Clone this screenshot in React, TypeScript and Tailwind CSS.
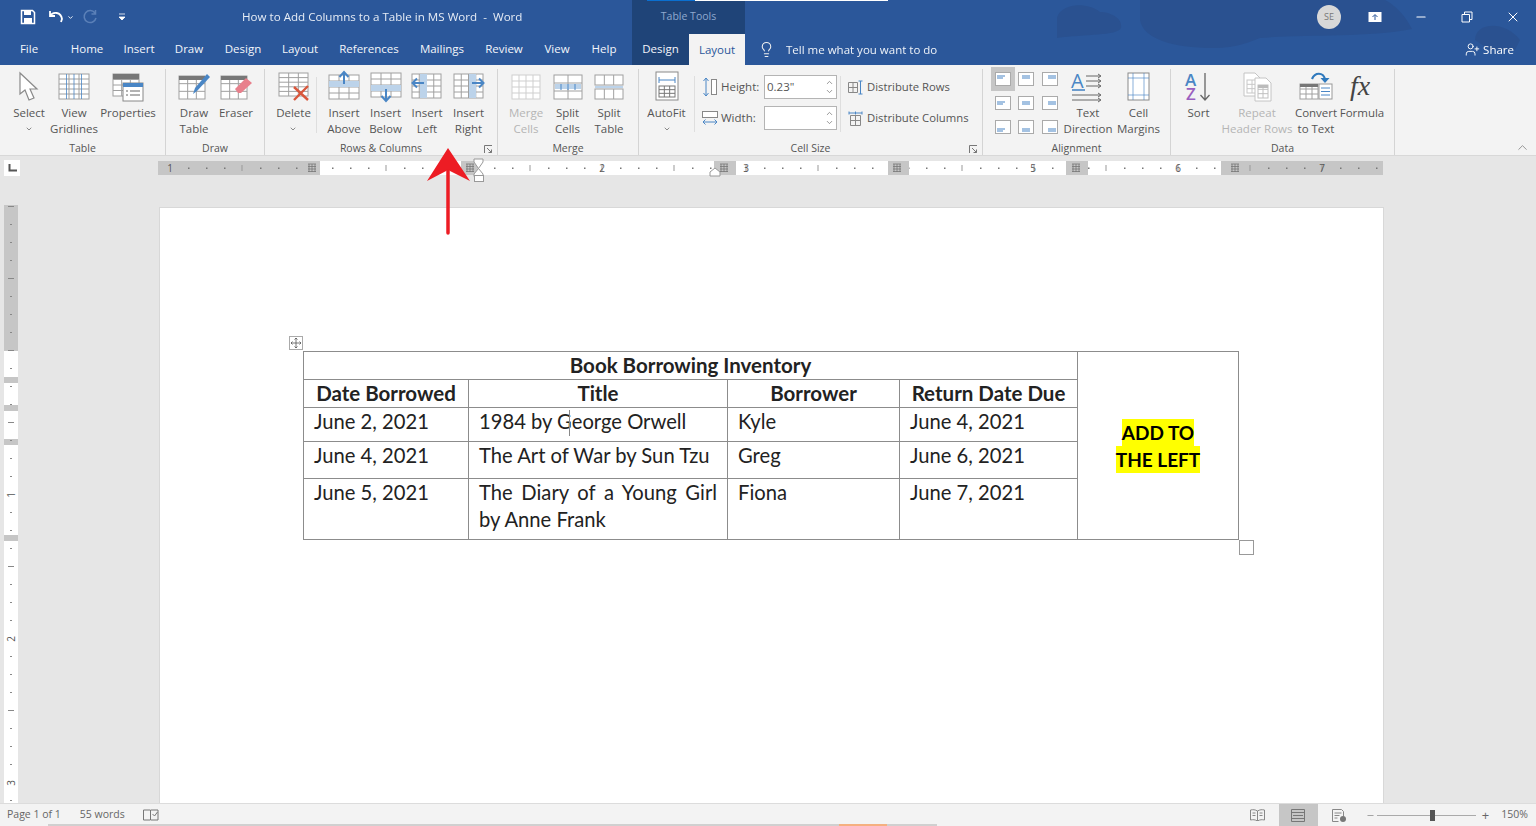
import { Lightbulb, Minus, UserPlus, X, ChevronUp, ChevronDown } from "lucide-react";
import type { ReactNode } from "react";

const LINE = "#a0a0a0";
const BLUE = "#4a86c5";
const PALE = "#bcd3ea";

function Lines({ x, y, w, h, cols, rows, color = LINE }: { x: number; y: number; w: number; h: number; cols: number; rows: number; color?: string }) {
	const v = Array.from({ length: cols - 1 }, (_, i) => x + ((i + 1) * w) / cols);
	const r = Array.from({ length: rows - 1 }, (_, i) => y + ((i + 1) * h) / rows);
	return (
		<g stroke={color} strokeWidth="1" fill="none">
			<rect x={x} y={y} width={w} height={h} fill="#fff" />
			{v.map((p) => (
				<line key={p} x1={p} x2={p} y1={y} y2={y + h} />
			))}
			{r.map((p) => (
				<line key={p} x1={x} x2={x + w} y1={p} y2={p} />
			))}
		</g>
	);
}

function Ico({ children, w = 32 }: { children: ReactNode; w?: number }) {
	return (
		<svg width={w} height="32" viewBox={`0 0 ${w} 32`} className="block overflow-visible">
			{children}
		</svg>
	);
}

const icons: Record<string, ReactNode> = {
	select: (
		<Ico>
			<path d="M7 2v21l5-4 4 10 5-2-4-9h7z" fill="#fff" stroke="#8a8a8a" strokeWidth="1.2" />
		</Ico>
	),
	grid: (
		<Ico>
			<Lines x={1} y={3} w={30} h={25} cols={3} rows={5} />
			<path d="M8.500 3v25M16 3v25M23.500 3v25" stroke={BLUE} strokeOpacity=".8" />
		</Ico>
	),
	props: (
		<Ico>
			<Lines x={1} y={3} w={26} h={22} cols={3} rows={4} />
			<rect x="1" y="3" width="26" height="5" fill="#777" />
			<rect x="11" y="12" width="20" height="18" fill="#fff" stroke="#888" />
			<rect x="11" y="12" width="20" height="4" fill={BLUE} />
			<path d="M14 20h2M18 20h10M14 24h2M18 24h10" stroke="#666" />
		</Ico>
	),
	draw: (
		<Ico>
			<Lines x={1} y={5} w={26} h={23} cols={3} rows={3} />
			<rect x="1" y="5" width="26" height="4" fill="#777" />
			<path d="M15 23l2-6 12-14 3 3-13 14z" fill={BLUE} />
		</Ico>
	),
	eraser: (
		<Ico>
			<Lines x={1} y={5} w={26} h={23} cols={3} rows={3} />
			<rect x="1" y="5" width="26" height="4" fill="#777" />
			<path d="M15 18l11-11 6 5-11 10h-3z" fill="#e8808c" />
		</Ico>
	),
	del: (
		<Ico>
			<Lines x={1} y={2} w={29} h={23} cols={3} rows={5} />
			<path d="M16 16l14 13M30 15L16 29" stroke="#d9573c" strokeWidth="2.400" />
		</Ico>
	),
	above: (
		<Ico>
			<Lines x={1} y={4} w={30} h={24} cols={3} rows={4} />
			<rect x="1" y="10" width="30" height="6" fill={PALE} />
			<path d="M16 13V1M11.500 6L16 1l4.500 5" stroke={BLUE} strokeWidth="2" fill="none" />
		</Ico>
	),
	below: (
		<Ico>
			<Lines x={1} y={2} w={30} h={24} cols={3} rows={4} />
			<rect x="1" y="14" width="30" height="6" fill={PALE} />
			<path d="M16 18v12M11.500 25l4.500 5 4.500-5" stroke={BLUE} strokeWidth="2" fill="none" />
		</Ico>
	),
	left: (
		<Ico>
			<Lines x={1} y={3} w={29} h={24} cols={4} rows={4} />
			<rect x="9" y="3" width="7" height="24" fill={PALE} />
			<path d="M13 12H1.500M6 7.500L1.500 12 6 16.500" stroke={BLUE} strokeWidth="2" fill="none" />
		</Ico>
	),
	right: (
		<Ico>
			<Lines x={1} y={3} w={29} h={24} cols={4} rows={4} />
			<rect x="16" y="3" width="7" height="24" fill={PALE} />
			<path d="M19 12h11.500M26 7.500l4.500 4.500-4.500 4.500" stroke={BLUE} strokeWidth="2" fill="none" />
		</Ico>
	),
	merge: (
		<Ico>
			<Lines x={2} y={4} w={28} h={24} cols={4} rows={4} color="#cfcfcf" />
		</Ico>
	),
	split: (
		<Ico>
			<Lines x={2} y={4} w={28} h={24} cols={2} rows={3} />
			<rect x="3" y="13" width="26" height="5" fill={PALE} />
			<path d="M9 13v6M16 13v6M23 13v6" stroke={BLUE} />
		</Ico>
	),
	splitT: (
		<Ico>
			<Lines x={2} y={4} w={28} h={10} cols={3} rows={1} />
			<Lines x={2} y={18} w={28} h={10} cols={3} rows={1} />
			<path d="M2 16h28" stroke={PALE} strokeWidth="2" />
		</Ico>
	),
	autofit: (
		<Ico>
			<rect x="5" y="1" width="22" height="28" fill="#fff" stroke="#8a8a8a" />
			<path d="M8 9h16M8 6v6M24 6v6" stroke={BLUE} />
			<Lines x={8} y={15} w={16} h={11} cols={3} rows={3} color="#777" />
		</Ico>
	),
	textdir: (
		<Ico w={34}>
			<text x="0" y="17" fontSize="20" fontFamily="'Open Sans', sans-serif" fill={BLUE}>
				A
			</text>
			<path d="M1 19h13" stroke={BLUE} strokeWidth="1.600" />
			<path d="M15 5h14M15 10h14M15 15h14M1 24h28M1 29h28M27 3l3 2-3 2M27 8l3 2-3 2M27 13l3 2-3 2M27 22l3 2-3 2M27 27l3 2-3 2" stroke="#666" fill="none" />
		</Ico>
	),
	margins: (
		<Ico>
			<rect x="5" y="2" width="21" height="27" fill="#fff" stroke="#8a8a8a" />
			<path d="M5 7h21M5 24h21M10 2v27M21 2v27" stroke={BLUE} strokeOpacity=".65" />
		</Ico>
	),
	sort: (
		<Ico w={28}>
			<text x="0" y="15" fontSize="17" fontFamily="'Open Sans', sans-serif" fontWeight="600" fill={BLUE}>
				A
			</text>
			<text x="1" y="29" fontSize="17" fontFamily="'Open Sans', sans-serif" fontWeight="600" fill="#9a5fc0">
				Z
			</text>
			<path d="M20 2v27M15.500 24l4.500 5 4.500-5" stroke="#666" strokeWidth="1.300" fill="none" />
		</Ico>
	),
	repeat: (
		<Ico>
			<path d="M3 2h11l5 5v18H3z" fill="#fff" stroke="#c4c4c4" />
			<Lines x={6} y={9} w={10} h={13} cols={2} rows={3} color="#c8c8c8" />
			<path d="M14 7h11l5 5v18H14z" fill="#fff" stroke="#c4c4c4" />
			<Lines x={17} y={14} w={10} h={13} cols={2} rows={3} color="#c0c0c0" />
			<rect x="17" y="14" width="10" height="3" fill="#bbb" />
		</Ico>
	),
	convert: (
		<Ico w={34}>
			<path d="M13 8C16 1 24 1 26 8" stroke="#2f79bd" strokeWidth="2.200" fill="none" />
			<path d="M21.500 7h9l-4.500 5z" fill="#2f79bd" />
			<Lines x={1} y={13} w={18} h={15} cols={3} rows={3} />
			<rect x="1" y="13" width="18" height="3" fill="#777" />
			<rect x="20" y="13" width="13" height="15" fill="#fff" stroke="#999" />
			<path d="M22 17h9M22 20.500h9M22 24h9" stroke={BLUE} />
		</Ico>
	),
	fx: (
		<Ico w={30}>
			<text x="3" y="24" fontSize="28" fontStyle="italic" fontFamily="'Liberation Serif', serif" fill="#444">
				fx
			</text>
		</Ico>
	),
};

function Btn({ icon, l1, l2, w, off, caret }: { icon: string; l1: string; l2?: string; w: string; off?: boolean; caret?: boolean }) {
	return (
		<div className={`${w} flex flex-col items-center shrink-0`}>
			<div className="h-[36px] flex items-center justify-center">{icons[icon]}</div>
			<div className={`text-center leading-[16px] whitespace-nowrap ${off ? "text-[#b5b5b5]" : "text-[#555]"}`}>
				<div>{l1}</div>
				{l2 && <div>{l2}</div>}
				{caret && (
					<div className="h-[16px] flex justify-center items-center">
						<ChevronDown size={8} strokeWidth={2} />
					</div>
				)}
			</div>
		</div>
	);
}

function Group({ label, w, children, launcher, noBorder }: { label: string; w: string; children: ReactNode; launcher?: boolean; noBorder?: boolean }) {
	return (
		<div className={`${w} h-full flex flex-col shrink-0 relative ${noBorder ? "" : "border-r border-[#d4d4d4]"}`}>
			<div className="flex-1 flex min-h-0">{children}</div>
			<div className="h-[14px] text-center leading-[14px] text-[10.500px] text-[#555]">{label}</div>
			{launcher && (
				<svg width="9" height="9" viewBox="0 0 9 9" className="absolute right-[4px] bottom-[1px]">
					<path d="M.5 8V.5H8M3 3l4.500 4.500M7.500 4.500v3h-3" stroke="#777" fill="none" />
				</svg>
			)}
		</div>
	);
}

function AlignBox({ y, align, on }: { y: number; align: number; on?: boolean }) {
	const x = align === 0 ? 2 : align === 1 ? 4 : 6;
	return (
		<div className={`h-[24px] flex items-center justify-center ${on ? "bg-[#c6c6c6]" : ""}`}>
			<svg width="16" height="14" viewBox="0 0 16 14">
				<rect x=".5" y=".5" width="15" height="13" fill="#fff" stroke="#aaa" />
				<path d={`M${x} ${y}h8M${x} ${y + 2}h${align === 0 ? 6 : 8}`} stroke={BLUE} strokeWidth="1.200" />
			</svg>
		</div>
	);
}

function Spin({ value }: { value?: string }) {
	return (
		<div className="w-[73px] h-[24px] border border-[#b4b4b4] bg-white flex items-center justify-between pl-[2px] pr-[2px] text-[#555]">
			<span>{value}</span>
			<span className="flex flex-col text-[#777]">
				<ChevronUp size={9} />
				<ChevronDown size={9} />
			</span>
		</div>
	);
}

function HRuler() {
	const ticks: number[] = [];
	for (let x = 170 - 158 + 18; x < 1225; x += 18) ticks.push(x);
	const nums = [
		[12, "1"],
		[444, "2"],
		[588, "3"],
		[875, "5"],
		[1020, "6"],
		[1164, "7"],
	] as const;
	return (
		<div className="w-[1225px] h-[14px] mt-[5px] ml-[138px] relative flex bg-white">
			<div className="w-[156px] bg-[#c6c6c6]" />
			<div className="flex-1" />
			<div className="w-[162px] bg-[#c6c6c6]" />
			<svg width="1225" height="14" className="absolute left-0 top-0 overflow-visible">
				{ticks.map((x, i) =>
					(i + 1) % 4 === 0 ? (
						<line key={x} x1={x} x2={x} y1="4" y2="10" stroke="#999" />
					) : (
						<rect key={x} x={x} y="6.500" width="1.500" height="1.500" fill="#777" />
					),
				)}
				<rect x="145" width="17" height="14" fill="#c6c6c6" />
				<rect x="303" width="17" height="14" fill="#c6c6c6" />
				<rect x="556" width="22" height="14" fill="#c6c6c6" />
				<rect x="730" width="21" height="14" fill="#c6c6c6" />
				<rect x="908" width="22" height="14" fill="#c6c6c6" />
				<rect x="1068" width="20" height="14" fill="#c6c6c6" />
				{[150, 308, 562, 735, 914, 1073].map((x) => (
					<path key={x} d={`M${x} 3h8M${x} 5.500h8M${x} 8h8M${x} 10.500h8M${x + 1} 3v8M${x + 4} 3v8M${x + 7} 3v8`} stroke="#777" strokeWidth=".8" />
				))}
				{nums.map(([x, t]) => (
					<text key={t} x={x} y="11" fontSize="10" textAnchor="middle" fill="#555" fontFamily="'Open Sans', sans-serif">
						{t}
					</text>
				))}
				<path d="M316 -2h9v3l-4.500 6.500 4.500 5.500v2.500h-9v-2.500l4.500-5.500-4.500-6.500z" fill="#fff" stroke="#999" />
				<rect x="316.500" y="14.500" width="9" height="6" fill="#fff" stroke="#999" />
				<path d="M552 15v-4l5-4 5 4v4z" fill="#fff" stroke="#999" />
			</svg>
		</div>
	);
}

function VRuler() {
	const ticks: number[] = [];
	for (let y = 0; y < 598; y += 18) ticks.push(y);
	return (
		<div className="w-[14px] h-[598px] -mt-[2px] relative flex flex-col bg-white">
			<div className="h-[146px] bg-[#c6c6c6] shrink-0" />
			<div className="h-[26px] shrink-0" />
			<div className="h-[6px] bg-[#c6c6c6] shrink-0" />
			<div className="h-[22px] shrink-0" />
			<div className="h-[6px] bg-[#c6c6c6] shrink-0" />
			<div className="h-[28px] shrink-0" />
			<div className="h-[6px] bg-[#c6c6c6] shrink-0" />
			<div className="h-[90px] shrink-0" />
			<div className="h-[6px] bg-[#c6c6c6] shrink-0" />
			<svg width="14" height="598" className="absolute left-0 top-0">
				{ticks.map((y, i) =>
					i % 4 === 0 ? (
						<line key={y} x1="4" x2="10" y1={y + 1.500} y2={y + 1.500} stroke="#888" />
					) : (
						<rect key={y} x="6" y={y + 1} width="2" height="1" fill="#888" />
					),
				)}
				{[
					[290, "1"],
					[434, "2"],
					[578, "3"],
				].map(([y, t]) => (
					<g key={t} transform={`translate(7 ${y}) rotate(-90)`}>
						<rect x="-5" y="-6" width="10" height="12" fill="#fff" />
						<text y="3.500" fontSize="10" textAnchor="middle" fill="#555" fontFamily="'Open Sans', sans-serif">
							{t}
						</text>
					</g>
				))}
			</svg>
		</div>
	);
}

function Td({ children, className = "", colSpan, rowSpan }: { children: ReactNode; className?: string; colSpan?: number; rowSpan?: number }) {
	return (
		<td colSpan={colSpan} rowSpan={rowSpan} className={`border border-[#8c8c8c] px-[10px] align-top p-0 ${className}`}>
			{children}
		</td>
	);
}

export default function App() {
	return (
		<div className="w-[1536px] h-[826px] overflow-hidden flex flex-col font-['Open_Sans',sans-serif] text-[11.500px] relative blur-[0.35px]">
			{/* title bar */}
			<div className="h-[65px] bg-[#2b579a] flex text-white shrink-0 relative">
				<div className="w-[632px] flex flex-col shrink-0">
					<div className="h-[34px] flex items-center relative">
						<svg width="16" height="16" viewBox="0 0 16 16" className="ml-[20px]">
							<path d="M1.500 1.500h11l2 2v11h-13z" fill="none" stroke="#fff" strokeWidth="1.500" />
							<path d="M4 1.500h7v4.500H4z" fill="#fff" />
							<path d="M4 9h8v5.500H4z" fill="#fff" />
						</svg>
						<svg width="16" height="16" viewBox="0 0 16 16" className="ml-[12px]">
							<path d="M2 7c3-5 11-4 12 3l-1 3M2 2v5h5" stroke="#fff" strokeWidth="1.800" fill="none" />
						</svg>
						<ChevronDown size={7} strokeWidth={3} className="ml-[3px]" />
						<svg width="16" height="16" viewBox="0 0 16 16" className="ml-[8px]">
							<path d="M13 4A6 6 0 1 0 14 9M13.500 1v4h-4" stroke="#5b80b8" strokeWidth="1.500" fill="none" />
						</svg>
						<svg width="8" height="8" viewBox="0 0 8 8" className="ml-[20px]">
							<path d="M1 1h6M1 4h6l-3 3z" stroke="#fff" fill="#fff" strokeWidth=".8" />
						</svg>
						<span className="ml-[116px] text-[11.600px] text-[#e6ecf5] whitespace-nowrap">How to Add Columns to a Table in MS Word&nbsp; -&nbsp; Word</span>
					</div>
					<div className="h-[31px] flex items-center pb-[1px] text-[#f3f6fb] text-center">
						<span className="w-[58px]">File</span>
						<span className="w-[58px]">Home</span>
						<span className="w-[46px]">Insert</span>
						<span className="w-[54px]">Draw</span>
						<span className="w-[54px]">Design</span>
						<span className="w-[60px]">Layout</span>
						<span className="w-[78px]">References</span>
						<span className="w-[68px]">Mailings</span>
						<span className="w-[56px]">Review</span>
						<span className="w-[50px]">View</span>
						<span className="w-[44px]">Help</span>
					</div>
				</div>
				<div className="w-[113px] bg-[#1f4478] flex flex-col shrink-0">
					<div className="h-[34px] flex items-center justify-center text-[10.500px] text-[#8fa9cf]">Table Tools</div>
					<div className="h-[31px] flex items-stretch text-center">
						<div className="w-[57px] flex items-center justify-center pb-[1px] text-[#f3f6fb]">Design</div>
						<div className="w-[56px] bg-[#f3f3f3] flex items-center justify-center text-[#2b579a]">Layout</div>
					</div>
				</div>
				<div className="flex-1 flex flex-col relative min-w-0">
					<svg width="791" height="65" className="absolute left-0 top-0">
						<path d="M312 20C312 5 340 0 355 12C365 12 378 18 376 28C372 36 340 34 312 38z" fill="#2a5190" />
						<path d="M395 0V20C398 38 425 48 470 48C490 48 505 42 515 38C560 34 620 38 667 29C660 15 650 5 640 0z" fill="#2a5190" />
						<path d="M730 40C730 22 760 20 775 40L770 50H745z" fill="#2a5190" />
					</svg>
					<div className="h-[34px] flex items-center justify-end relative">
						<div className="w-[24px] h-[24px] rounded-full bg-[#d8d8d8] text-[#777] text-[9px] flex items-center justify-center mr-[27px]">SE</div>
						<svg width="14" height="12" viewBox="0 0 14 12" className="mr-[32px]">
							<rect x=".5" y="1" width="13" height="10" fill="#fff" />
							<path d="M7 9V4M4.500 6L7 3.500 9.500 6" stroke="#2b579a" fill="none" />
						</svg>
						<Minus size={14} className="mr-[33px]" />
						<svg width="12" height="12" viewBox="0 0 12 12" className="mr-[32px]">
							<path d="M1 3.500h7.500V11H1zM3.500 3V1H11v7.500H9" stroke="#fff" fill="none" />
						</svg>
						<X size={16} strokeWidth={1.500} className="mr-[15px]" />
					</div>
					<div className="h-[31px] flex items-center relative">
						<Lightbulb size={17} strokeWidth={1.500} className="ml-[13px] text-[#f0f0f0]" />
						<span className="ml-[11px] text-[#eef2f8]">Tell me what you want to do</span>
						<UserPlus size={15} strokeWidth={1.500} className="ml-auto mr-[3px]" />
						<span className="mr-[22px]">Share</span>
					</div>
				</div>
			</div>
			{/* ribbon */}
			<div className="h-[91px] bg-[#f3f3f3] border-b border-[#d8d8d8] flex pt-[4px] shrink-0 text-[#555] relative">
				<Group label="Table" w="w-[166px]">
					<div className="w-[7px]" />
					<Btn icon="select" l1="Select" caret w="w-[44px]" />
					<Btn icon="grid" l1="View" l2="Gridlines" w="w-[46px]" />
					<Btn icon="props" l1="Properties" w="w-[62px]" />
				</Group>
				<Group label="Draw" w="w-[99px]">
					<div className="w-[7px]" />
					<Btn icon="draw" l1="Draw" l2="Table" w="w-[42px]" />
					<Btn icon="eraser" l1="Eraser" w="w-[42px]" />
				</Group>
				<Group label="Rows & Columns" w="w-[233px]" launcher>
					<div className="w-[6px]" />
					<Btn icon="del" l1="Delete" caret w="w-[45px]" />
					<div className="w-px h-[56px] bg-[#dedede] mt-[8px] mr-[6px]" />
					<Btn icon="above" l1="Insert" l2="Above" w="w-[42px]" />
					<Btn icon="below" l1="Insert" l2="Below" w="w-[41px]" />
					<Btn icon="left" l1="Insert" l2="Left" w="w-[42px]" />
					<Btn icon="right" l1="Insert" l2="Right" w="w-[41px]" />
				</Group>
				<Group label="Merge" w="w-[141px]">
					<div className="w-[7px]" />
					<Btn icon="merge" l1="Merge" l2="Cells" off w="w-[42px]" />
					<Btn icon="split" l1="Split" l2="Cells" w="w-[41px]" />
					<Btn icon="splitT" l1="Split" l2="Table" w="w-[42px]" />
				</Group>
				<Group label="Cell Size" w="w-[344px]" launcher>
					<Btn icon="autofit" l1="AutoFit" caret w="w-[55px]" />
					<div className="w-px h-[56px] bg-[#dedede] mt-[7px]" />
					<div className="w-[145px] flex flex-col pl-[7px] pt-[6px] gap-[7px]">
						<div className="flex items-center h-[24px]">
							<svg width="16" height="20" viewBox="0 0 16 20">
								<path d="M4 1v18M1.500 4L4 1l2.500 3M1.500 16L4 19l2.500-3" stroke={BLUE} fill="none" />
								<rect x="9.500" y="2.500" width="5" height="15" fill="#fff" stroke="#888" />
							</svg>
							<span className="ml-[3px] w-[43px]">Height:</span>
							<Spin value={'0.23"'} />
						</div>
						<div className="flex items-center h-[24px]">
							<svg width="16" height="16" viewBox="0 0 16 16">
								<rect x=".5" y="1.500" width="15" height="6" fill="#fff" stroke="#888" />
								<path d="M1 12h14M3.500 9.500L1 12l2.500 2.500M12.500 9.500L15 12l-2.500 2.500" stroke={BLUE} fill="none" />
							</svg>
							<span className="ml-[3px] w-[43px]">Width:</span>
							<Spin />
						</div>
					</div>
					<div className="w-px h-[56px] bg-[#dedede] mt-[7px]" />
					<div className="flex flex-col pl-[7px] pt-[6px] gap-[7px] whitespace-nowrap text-[11.300px]">
						<div className="flex items-center h-[24px] gap-[4px]">
							<svg width="15" height="15" viewBox="0 0 15 15">
								<path d="M.5 2.500h9v10h-9zM.5 7.500h9M5 2.500v10" stroke="#888" fill="none" />
								<path d="M12.500 1v13M10.500 1h4M10.500 14h4" stroke={BLUE} fill="none" />
							</svg>
							Distribute Rows
						</div>
						<div className="flex items-center h-[24px] gap-[4px]">
							<svg width="15" height="15" viewBox="0 0 15 15">
								<path d="M2.500 4.500h10v10h-10zM2.500 9.500h10M7.500 4.500v10" stroke="#888" fill="none" />
								<path d="M1 2h13M1 .5v3M14 .5v3M7.500 .5v3" stroke={BLUE} fill="none" />
							</svg>
							Distribute Columns
						</div>
					</div>
				</Group>
				<Group label="Alignment" w="w-[188px]">
					<div className="w-[8px]" />
					<div className="w-[71px] grid grid-cols-3 content-start -mt-[2px]">
						<AlignBox y={4} align={0} on />
						<AlignBox y={4} align={1} />
						<AlignBox y={4} align={2} />
						<AlignBox y={6} align={0} />
						<AlignBox y={6} align={1} />
						<AlignBox y={6} align={2} />
						<AlignBox y={9} align={0} />
						<AlignBox y={9} align={1} />
						<AlignBox y={9} align={2} />
					</div>
					<Btn icon="textdir" l1="Text" l2="Direction" w="w-[52px]" />
					<Btn icon="margins" l1="Cell" l2="Margins" w="w-[49px]" />
				</Group>
				<Group label="Data" w="w-[224px]">
					<div className="w-[5px]" />
					<Btn icon="sort" l1="Sort" w="w-[45px]" />
					<Btn icon="repeat" l1="Repeat" l2="Header Rows" off w="w-[72px]" />
					<Btn icon="convert" l1="Convert" l2="to Text" w="w-[46px]" />
					<Btn icon="fx" l1="Formula" w="w-[46px]" />
				</Group>
				<ChevronUp size={15} strokeWidth={1.200} className="absolute right-[6px] bottom-[0px] text-[#777]" />
			</div>
			{/* workspace */}
			<div className="flex-1 bg-[#e6e6e6] flex flex-col min-h-0">
				<div className="h-[51px] flex shrink-0 items-start">
					<div className="w-[16px] h-[16px] bg-white mt-[4px] ml-[4px] flex items-center justify-center shrink-0">
						<svg width="9" height="8" viewBox="0 0 9 8">
							<path d="M1.500 0v6.500H9" stroke="#555" strokeWidth="2" fill="none" />
						</svg>
					</div>
					<HRuler />
				</div>
				<div className="flex-1 flex min-h-0 pl-[4px]">
					<VRuler />
					<div className="w-[1225px] ml-[141px] bg-white border border-[#d8d8d8] border-b-0 pt-[143px] pl-[143px] relative">
						<table className="table-fixed border-collapse w-[935px] font-['Lato',sans-serif] text-[20.200px] text-[#222] leading-[26px]">
							<colgroup>
								<col className="w-[165px]" />
								<col className="w-[259px]" />
								<col className="w-[172px]" />
								<col className="w-[178px]" />
								<col className="w-[161px]" />
							</colgroup>
							<tbody>
								<tr className="h-[28px] font-bold text-[20.500px] text-center leading-[26px]">
									<Td colSpan={4}>Book Borrowing Inventory</Td>
									<Td rowSpan={5} className="align-middle! font-bold text-center text-black text-[19px]! leading-[27px]">
										<span className="bg-[#ffff00] inline-block">ADD TO</span>
										<br />
										<span className="bg-[#ffff00] inline-block">THE LEFT</span>
									</Td>
								</tr>
								<tr className="h-[28px] font-bold text-[20.500px] text-center">
									<Td>Date Borrowed</Td>
									<Td>Title</Td>
									<Td>Borrower</Td>
									<Td>Return Date Due</Td>
								</tr>
								<tr className="h-[34px]">
									<Td>June 2, 2021</Td>
									<Td className="relative">
										1984 by George Orwell
										<span className="absolute left-[100px] top-[2px] w-px h-[26px] bg-[#888]" />
									</Td>
									<Td>Kyle</Td>
									<Td>June 4, 2021</Td>
								</tr>
								<tr className="h-[37px]">
									<Td>June 4, 2021</Td>
									<Td>The Art of War by Sun Tzu</Td>
									<Td>Greg</Td>
									<Td>June 6, 2021</Td>
								</tr>
								<tr className="h-[61px] leading-[27px]">
									<Td>June 5, 2021</Td>
									<Td>
										<div className="text-justify [text-align-last:justify]">The Diary of a Young Girl</div>
										<div>by Anne Frank</div>
									</Td>
									<Td>Fiona</Td>
									<Td>June 7, 2021</Td>
								</tr>
							</tbody>
						</table>
						<div className="absolute left-[129px] top-[128px] w-[14px] h-[14px] bg-white border border-[#aaa] flex items-center justify-center">
							<svg width="10" height="10" viewBox="0 0 10 10">
								<path d="M5 0v10M0 5h10M3.500 1.500L5 0l1.500 1.500M3.500 8.500L5 10l1.500-1.500M1.500 3.500L0 5l1.500 1.500M8.500 3.500L10 5 8.500 6.500" stroke="#555" strokeWidth=".8" fill="none" />
							</svg>
						</div>
						<div className="absolute left-[1079px] top-[332px] w-[15px] h-[15px] bg-white border border-[#999]" />
					</div>
				</div>
			</div>
			{/* status bar */}
			<div className="h-[23px] bg-[#f3f3f3] border-t border-[#dcdcdc] flex items-center text-[10.500px] text-[#666] shrink-0">
				<span className="ml-[7px]">Page 1 of 1</span>
				<span className="ml-[19px]">55 words</span>
				<svg width="16" height="12" viewBox="0 0 16 12" className="ml-[18px]">
					<path d="M.5 1h7v10h-7zM8 1h7v10H8" stroke="#777" fill="none" />
					<path d="M9.500 5l2 2 3-4" stroke="#777" fill="none" />
				</svg>
				<div className="ml-auto flex items-center h-full">
					<svg width="15" height="12" viewBox="0 0 15 12">
						<path d="M7.500 2C5 .5 3 .5 .5 1v10c2.500-.5 4.500-.5 7 1 2.500-1.500 4.500-1.500 7-1V1C12 .5 10 .5 7.500 2zm0 0v10M2.500 4h3M2.500 6.500h3M9.500 4h3M9.500 6.500h3" stroke="#888" fill="none" />
					</svg>
					<div className="w-[39px] h-full bg-[#c6c6c6] flex items-center justify-center ml-[14px]">
						<svg width="14" height="13" viewBox="0 0 14 13">
							<path d="M.5 .5h13v12H.5zM.5 3.500h13M.5 9.500h13M2 6.500h10" stroke="#777" fill="none" />
						</svg>
					</div>
					<svg width="15" height="13" viewBox="0 0 15 13" className="ml-[14px]">
						<path d="M.5 .5h9l2 2v5M.5 .5v12h6M2.500 4h7M2.500 6.500h5M2.500 9h3" stroke="#888" fill="none" />
						<circle cx="11" cy="10" r="3" fill="#777" />
					</svg>
					<Minus size={9} className="ml-[19px]" strokeWidth={1.500} />
					<div className="w-[99px] h-px bg-[#aaa] ml-[2px] relative">
						<div className="absolute left-[53px] top-[-5px] w-[5px] h-[11px] bg-[#555]" />
					</div>
					<span className="ml-[6px] text-[13px] leading-none">+</span>
					<span className="ml-[12px] mr-[8px]">150%</span>
				</div>
			</div>
			{/* strip of the window below, along the bottom edge */}
			<div className="absolute left-[48px] bottom-0 w-[889px] h-[2px] bg-[#d0d0d0]">
				<div className="ml-[791px] w-[48px] h-full bg-[#f5b080]" />
			</div>
			{/* annotation arrow */}
			<svg width="50" height="90" viewBox="0 0 50 90" className="absolute left-[423px] top-[146px]">
				<path d="M25 2L4 35l21-11 22 11z" fill="#ed1c24" />
				<path d="M25 25v62" stroke="#ed1c24" strokeWidth="3.500" strokeLinecap="round" />
			</svg>
			<div className="absolute left-[647px] top-0 w-[48px] h-px bg-[#0a6fd0]" />
			<div className="absolute left-[695px] top-0 w-[193px] h-px bg-white" />
		</div>
	);
}
